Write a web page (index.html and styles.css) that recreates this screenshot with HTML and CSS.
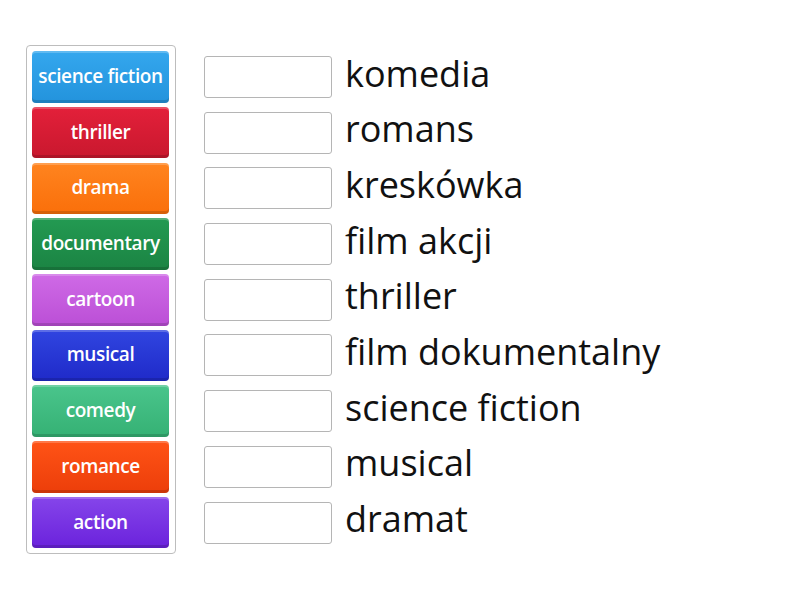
FILE: index.html
```html
<!DOCTYPE html>
<html>
<head>
<meta charset="utf-8">
<link rel="stylesheet" href="styles.css">
</head>
<body>
<div class="game">
  <div class="bank">
    <div class="tile c1">science fiction</div>
    <div class="tile c2">thriller</div>
    <div class="tile c3">drama</div>
    <div class="tile c4">documentary</div>
    <div class="tile c5">cartoon</div>
    <div class="tile c6">musical</div>
    <div class="tile c7">comedy</div>
    <div class="tile c8">romance</div>
    <div class="tile c9">action</div>
  </div>
  <div class="targets">
    <div class="row"><div class="slot"></div><span class="word">komedia</span></div>
    <div class="row"><div class="slot"></div><span class="word">romans</span></div>
    <div class="row"><div class="slot"></div><span class="word">kreskówka</span></div>
    <div class="row"><div class="slot"></div><span class="word">film akcji</span></div>
    <div class="row"><div class="slot"></div><span class="word">thriller</span></div>
    <div class="row"><div class="slot"></div><span class="word">film dokumentalny</span></div>
    <div class="row"><div class="slot"></div><span class="word">science fiction</span></div>
    <div class="row"><div class="slot"></div><span class="word">musical</span></div>
    <div class="row"><div class="slot"></div><span class="word">dramat</span></div>
  </div>
</div>
</body>
</html>
```
FILE: styles.css
```css
html, body {
  margin: 0;
  padding: 0;
  background: #fff;
}
body {
  font-family: "Open Sans", Lato, sans-serif;
}
.game {
  display: flex;
  align-items: flex-start;
  padding: 45px 0 0 26px;
}
.bank {
  box-sizing: border-box;
  width: 150px;
  border: 1px solid #bdbdbd;
  border-radius: 4px;
  padding: 5.3px 6px 5px 5px;
  display: flex;
  flex-direction: column;
  gap: 4.2px;
}
.tile {
  box-sizing: border-box;
  height: 51.5px;
  width: 137px;
  border-radius: 4px;
  color: #fff;
  font-weight: 600;
  font-size: 19px;
  display: flex;
  align-items: center;
  justify-content: center;
  white-space: nowrap;
  letter-spacing: -0.4px;
  padding-bottom: 2px;
  box-shadow: inset 0 2px 0 rgba(255,255,255,0.22), inset 0 -3px 0 rgba(0,0,0,0.14);
}
.c1 { background: linear-gradient(#34a7ee, #2393dc); }
.c2 { background: linear-gradient(#e3203a, #c9182e); }
.c3 { background: linear-gradient(#ff841f, #fa6f0a); }
.c4 { background: linear-gradient(#239a52, #1b8443); }
.c5 { background: linear-gradient(#cf6ae6, #bb4fd6); }
.c6 { background: linear-gradient(#3045e0, #1f2ac9); }
.c7 { background: linear-gradient(#4ac58c, #35b174); }
.c8 { background: linear-gradient(#ff5316, #ec3e0a); }
.c9 { background: linear-gradient(#8545ea, #6b22dc); }
.targets {
  margin-left: 28px;
  padding-top: 6.3px;
  display: flex;
  flex-direction: column;
  gap: 4.2px;
}
.row {
  height: 51.5px;
  display: flex;
  align-items: center;
}
.slot {
  box-sizing: border-box;
  width: 128px;
  height: 42px;
  border: 1px solid #b5b5b5;
  border-radius: 3px;
  background: #fff;
  flex: none;
}
.word {
  margin-left: 13px;
  font-size: 36px;
  color: #111;
  white-space: nowrap;
  position: relative;
  top: -4px;
}
```
